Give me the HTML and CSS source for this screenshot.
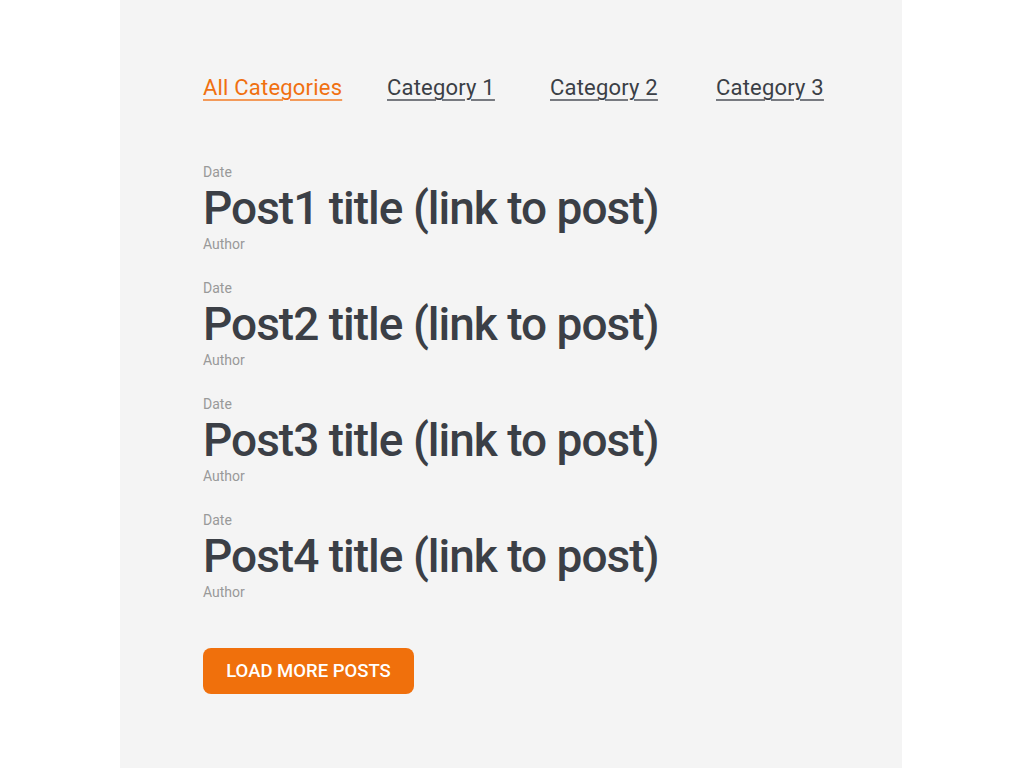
FILE: index.html
```html
<!DOCTYPE html>
<html>
<head>
<meta charset="utf-8">
<link rel="stylesheet" href="styles.css">
</head>
<body>
<main class="page">
  <nav class="cats">
    <a class="cat active" href="#">All Categories</a>
    <a class="cat" href="#">Category 1</a>
    <a class="cat" href="#">Category 2</a>
    <a class="cat" href="#">Category 3</a>
  </nav>
  <section class="posts">
    <article class="post">
      <div class="meta">Date</div>
      <a class="title" href="#">Post1 title (link to post)</a>
      <div class="meta">Author</div>
    </article>
    <article class="post">
      <div class="meta">Date</div>
      <a class="title" href="#">Post2 title (link to post)</a>
      <div class="meta">Author</div>
    </article>
    <article class="post">
      <div class="meta">Date</div>
      <a class="title" href="#">Post3 title (link to post)</a>
      <div class="meta">Author</div>
    </article>
    <article class="post">
      <div class="meta">Date</div>
      <a class="title" href="#">Post4 title (link to post)</a>
      <div class="meta">Author</div>
    </article>
  </section>
  <button class="more">LOAD MORE POSTS</button>
</main>
</body>
</html>
```
FILE: styles.css
```css
html, body {
  margin: 0;
  padding: 0;
  background: #ffffff;
}
body {
  font-family: Roboto, "Liberation Sans", sans-serif;
  color: #3b3f46;
}
.page {
  width: 782px;
  margin: 0 0 0 120px;
  min-height: 768px;
  box-sizing: border-box;
  background: #f4f4f4;
  padding: 73px 70px 0 83px;
}
.cats {
  display: grid;
  grid-template-columns: 184px 163px 166px max-content;
}
.cat {
  justify-self: start;
  white-space: nowrap;
  font-size: 22px;
  line-height: 30px;
  letter-spacing: 0.2px;
  color: #3b3f46;
  text-decoration: underline;
  text-decoration-thickness: 2px;
  text-underline-offset: 4px;
  text-decoration-color: #777a80;
}
.cat.active {
  color: #f07010;
  text-decoration-color: #f39a5a;
}
.posts {
  display: flex;
  flex-direction: column;
  gap: 28px;
  margin-top: 61px;
}
.post {
  display: flex;
  flex-direction: column;
}
.meta {
  font-size: 14px;
  line-height: 16px;
  color: #999999;
}
.title {
  font-size: 46px;
  font-weight: 500;
  letter-spacing: -1px;
  line-height: 56px;
  color: #3b3f46;
  text-decoration: none;
}
.more {
  margin-top: 48px;
  width: 211px;
  height: 46px;
  border: none;
  border-radius: 8px;
  background: #f0700c;
  color: #fff;
  font-family: Roboto, "Liberation Sans", sans-serif;
  font-size: 18.5px;
  font-weight: 500;
  padding: 0;
}
```
